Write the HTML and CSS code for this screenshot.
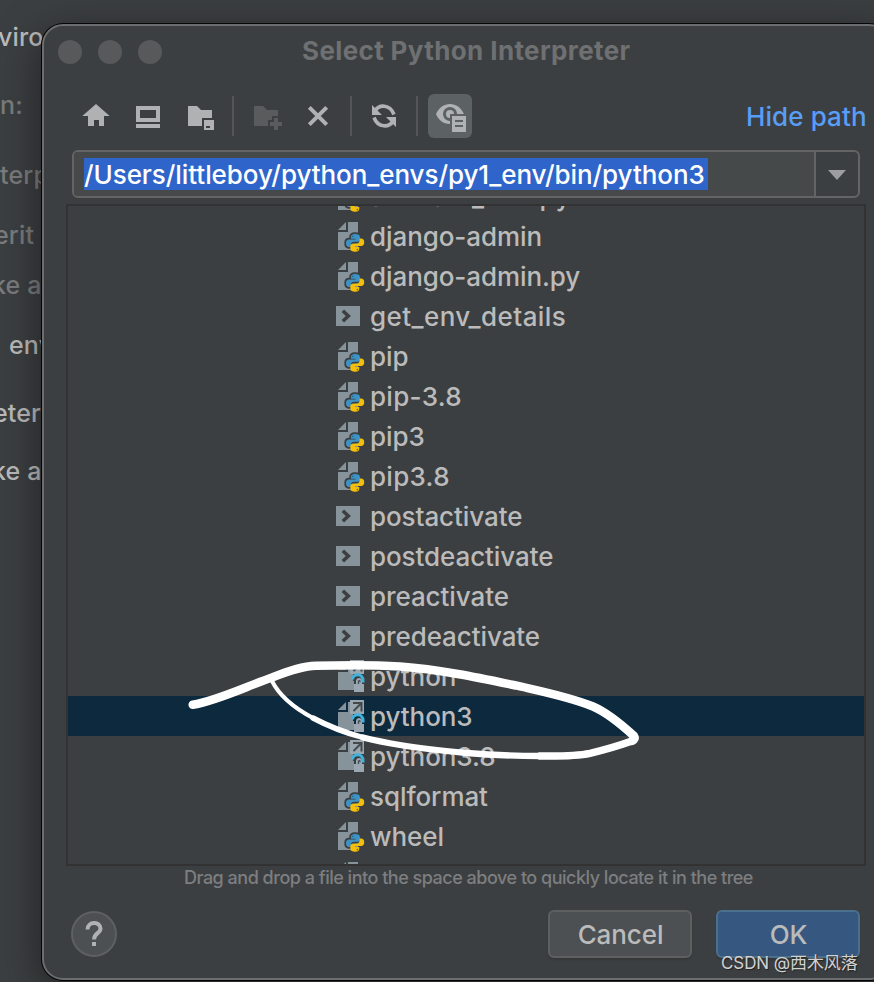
FILE: index.html
```html
<!DOCTYPE html>
<html lang="en">
<head>
<meta charset="utf-8">
<title>Select Python Interpreter</title>
<link rel="stylesheet" href="styles.css">
</head>
<body>
<svg class="defs" width="0" height="0" aria-hidden="true">
  <symbol id="py" viewBox="0 0 32 40">
    <path fill="#87939a" d="M2 14L10 6v8zM12 6h10v28H2V16h10z"/>
    <g transform="translate(9.600 17.300)">
      <path fill="#3c3f41" stroke="#3c3f41" stroke-width="2.800" transform="scale(1.19)" d="M8 .5C5.500.5 4.500 1.500 4.500 3v1.500h3.700v.7H3C1.300 5.200.3 6.500.3 8.400c0 2 1.100 3.100 2.500 3.100h1.500V9.800c0-1.500 1.200-2.600 2.700-2.600h3c1.200 0 2-.9 2-2V3C12 1.400 10.400.5 8 .5z"/>
      <path fill="#3d94c4" transform="scale(1.19)" d="M8 .5C5.500.5 4.500 1.500 4.500 3v1.500h3.700v.7H3C1.300 5.200.3 6.500.3 8.400c0 2 1.100 3.100 2.500 3.100h1.500V9.800c0-1.500 1.200-2.600 2.700-2.600h3c1.200 0 2-.9 2-2V3C12 1.400 10.400.5 8 .5z"/>
      <path fill="#f2bf0c" transform="translate(19 19) scale(-1.190)" d="M8 .5C5.500.5 4.500 1.500 4.500 3v1.500h3.700v.7H3C1.300 5.200.3 6.500.3 8.400c0 2 1.100 3.100 2.500 3.100h1.500V9.800c0-1.500 1.200-2.600 2.700-2.600h3c1.200 0 2-.9 2-2V3C12 1.400 10.400.5 8 .5z"/>
      <circle cx="7.200" cy="2.900" r=".8" fill="#2c6387"/><circle cx="11.800" cy="16.300" r=".8" fill="#6b5a1c"/>
    </g>
  </symbol>
  <symbol id="sh" viewBox="0 0 32 40">
    <path fill="#87939a" d="M0 10h24v20H0z"/>
    <path fill="none" stroke="#3c3f41" stroke-width="3.600" d="M6.800 14.800L12.300 20l-5.500 5.200"/>
  </symbol>
  <symbol id="ln" viewBox="0 0 32 40">
    <path fill="#87939a" d="M2 14L10 6v8zM12 6h2v12h3v7h1v9H2V16h10z"/>
    <path fill="#9aa7b0" d="M14 4h14v14H14z"/>
    <path fill="none" stroke="#45494c" stroke-width="2" d="M17 7h8.500v8.500M25 7.500l-7.500 7.500"/>
    <path fill="none" stroke="#3fb3dc" stroke-width="3" d="M16.500 23.500c.5-6.500 10.500-6.500 10.500 1v2"/>
    <path fill="#9aa7b0" d="M18 28h2v-3c0-4 6-4 6 0v3h2v8H18z"/>
    <path fill="none" stroke="#44525c" stroke-width="1.400" d="M22.500 28v-2.500c.2-1.500 1.800-1 1.500.5"/>
  </symbol>
</svg>
<main class="screen">
  <div class="behind">
    <div class="line l1">viro</div>
    <div class="line l2 dim">n:</div>
    <div class="line l3 dim">terp</div>
    <div class="line l4 dim">erit</div>
    <div class="line l5 dim">ke a</div>
    <div class="line l6">env</div>
    <div class="line l7">eter</div>
    <div class="line l8">ke a</div>
  </div>

  <section class="dialog">
    <header class="titlebar">
      <div class="lights"><i></i><i></i><i></i></div>
      <h1><span>Select Python Interpreter</span></h1>
    </header>

    <div class="toolbar">
      <svg width="32" height="32"><path fill="#afb1b3" d="M16 4L29.700 16H24v10h-5v-6h-5v6H8V16H2.300z"/></svg>
      <svg class="g20" width="32" height="32"><path fill="#afb1b3" fill-rule="evenodd" d="M4 6h24v16H4zM8 10v8h16v-8zM4 24h24v4H4z"/></svg>
      <svg class="g20" width="32" height="32"><path fill="#afb1b3" fill-rule="evenodd" d="M4 6h9l4 4h11v8H18v8H4zM20 20h10v10H20zM22 26v2h4v-2z"/></svg>
      <i class="sep g16"></i>
      <svg class="g16" width="32" height="32"><path fill="#5a5b5c" d="M4 6h9l4 4h11v6h-6v4h-4v6H4zM24 18h4v4h4v4h-4v4h-4v-4h-4v-4h4z"/></svg>
      <svg class="g20" width="32" height="32"><path stroke="#afb1b3" stroke-width="4" d="M7.300 7.300l17.400 17.400M24.700 7.300L7.300 24.700"/></svg>
      <i class="sep g16"></i>
      <svg class="g16" width="32" height="32"><path fill="none" stroke="#afb1b3" stroke-width="3.600" d="M7 11c4-7 15-7 19 3.500M25 21c-4 7-15 7-19-3.500"/><path fill="#afb1b3" d="M4 5v10h10zM28 27V17H18z"/></svg>
      <i class="sep g16"></i>
      <span class="toggle">
        <svg width="44" height="44"><path fill="#afb1b3" fill-rule="evenodd" d="M8 20c3-6.500 8-10 14-10s11 3.500 14 10H22v10C15 30 10.500 26 8 20zM22 13a7 7 0 1 0 .01 0z"/><circle cx="22" cy="20" r="4" fill="#afb1b3"/><path fill="#5c6164" d="M22 20h18v20H22z"/><path fill="#afb1b3" fill-rule="evenodd" d="M24 22h14v16H24zM27 26v2h8v-2zM27 31v2h8v-2z"/></svg>
      </span>
      <a class="hide"><span>Hide path</span></a>
    </div>

    <div class="combo">
      <div class="field"><span class="sel"><span>/Users/littleboy/python_envs/py1_env/bin/python3</span></span></div>
      <div class="drop"><svg width="18" height="10"><path fill="#9c9ea0" d="M0 0h18L9 10z"/></svg></div>
    </div>

    <div class="tree">
      <div class="row first"><svg><use href="#py"/></svg><span class="wide">activate_this.py</span></div>
      <div class="row"><svg><use href="#py"/></svg><span>django-admin</span></div>
      <div class="row"><svg><use href="#py"/></svg><span>django-admin.py</span></div>
      <div class="row"><svg><use href="#sh"/></svg><span class="wide">get_env_details</span></div>
      <div class="row"><svg><use href="#py"/></svg><span>pip</span></div>
      <div class="row"><svg><use href="#py"/></svg><span class="num">pip-3.8</span></div>
      <div class="row"><svg><use href="#py"/></svg><span>pip3</span></div>
      <div class="row"><svg><use href="#py"/></svg><span class="num">pip3.8</span></div>
      <div class="row"><svg><use href="#sh"/></svg><span>postactivate</span></div>
      <div class="row"><svg><use href="#sh"/></svg><span>postdeactivate</span></div>
      <div class="row"><svg><use href="#sh"/></svg><span>preactivate</span></div>
      <div class="row"><svg><use href="#sh"/></svg><span>predeactivate</span></div>
      <div class="row"><svg><use href="#ln"/></svg><span>python</span></div>
      <div class="row selected"><svg><use href="#ln"/></svg><span>python3</span></div>
      <div class="row"><svg><use href="#ln"/></svg><span>python3.8</span></div>
      <div class="row"><svg><use href="#py"/></svg><span>sqlformat</span></div>
      <div class="row"><svg><use href="#py"/></svg><span>wheel</span></div>
      <div class="row"><svg><use href="#py"/></svg></div>
    </div>

    <p class="hint"><span>Drag and drop a file into the space above to quickly locate it in the tree</span></p>

    <footer class="actions">
      <span class="help"><svg width="18" height="26"><path fill="none" stroke="#afb1b3" stroke-width="4" d="M2.500 8.500C2.500 0 15.500 0 15.500 7.500c0 5-6.500 4.500-6.500 11"/><path fill="#afb1b3" d="M7 21h4v4H7z"/></svg></span>
      <span class="btn cancel">Cancel</span>
      <span class="btn ok">OK</span>
    </footer>
  </section>

  <svg class="ink" width="874" height="982" viewBox="0 0 874 982">
    <g fill="none" stroke="#fff" stroke-linecap="round" stroke-linejoin="round">
      <path stroke-width="8.500" d="M192.700 704.800C216 701 245 687 272 677.500C290 670.500 303 666 316 665.800C345 665 375 665 400 666.500C440 669.500 480 678 517 685.700C540 691 570 697 593 706.500C608 713 622 725 634 736Q636 739 632 741"/>
      <path stroke-width="7.400" d="M632 741C618 746 606 749.500 590 753.300C575 756.500 560 756 540 756"/>
      <path stroke-width="6.300" d="M540 756C515 756 490 755 466.700 753C450 751.500 420 748.500 400 745C388 743 375 740.500 363 737.500"/>
      <path stroke-width="5.400" d="M363 737.500C346 733 328 726 313 718"/>
      <path stroke-width="4" d="M313 718C298 710 280 697 272 681"/>
    </g>
  </svg>
  <div class="watermark"><span>CSDN @西木风落</span></div>
</main>
</body>
</html>
```
FILE: styles.css
```css
* { box-sizing: border-box; }
body {
  margin: 0;
  width: 874px;
  height: 982px;
  overflow: hidden;
  background: #3c3f41;
  font-family: Inter, "Noto Sans CJK SC", sans-serif;
  font-size: 26px;
  font-weight: 450;
  color: #bbbbbb;
}
svg { display: block; flex: none; }
.defs { position: absolute; }
.screen { position: relative; width: 874px; height: 982px; overflow: hidden; }

.behind { display: flex; flex-direction: column; width: 60px; }
.line { height: 30px; line-height: 30px; font-size: 25px; letter-spacing: .15px; white-space: pre; }
.dim { color: #7b7c7d; }
.l1 { margin: 22px 0 0 -2px; }
.l2 { margin-top: 38px; }
.l3 { margin-top: 40px; }
.l4 { margin: 30px 0 0 -6px; }
.l5 { margin: 20px 0 0 -8px; }
.l6 { margin: 30px 0 0 9px; }
.l7 { margin: 38px 0 0 -7px; }
.l8 { margin: 28px 0 0 -8px; }

.dialog {
  position: absolute;
  left: 42px;
  top: 24px;
  width: 848px;
  height: 956px;
  border: 2px solid #6b6d6e;
  border-radius: 21px;
  background: #3c3f41;
  box-shadow: 0 0 0 1px #050505, 0 12px 44px rgba(0, 0, 0, .5);
}

.titlebar { display: flex; align-items: center; height: 52px; padding-left: 14px; }
.lights { display: flex; gap: 16px; width: 244px; }
.lights i { width: 24px; height: 24px; border-radius: 50%; background: #58595b; }
h1 { margin: 0; font-size: 26px; line-height: 30px; font-weight: 700; color: #6e7072; letter-spacing: .37px; white-space: nowrap; padding-bottom: 2px; }

.toolbar { display: flex; align-items: center; height: 44px; margin-top: 16px; padding-left: 36px; }
.g20 { margin-left: 20px; }
.g16 { margin-left: 16px; }
.sep { width: 2px; height: 40px; background: #555555; }
.toggle { width: 44px; height: 44px; margin-left: 10px; border-radius: 6px; background: #5c6164; }
.hide { margin-left: 274px; padding-top: 2px; color: #589df6; letter-spacing: .1px; white-space: nowrap; line-height: 32px; }

.combo {
  display: flex;
  width: 788px;
  height: 48px;
  margin: 12px 0 0 28px;
  border: 2px solid #646464;
  border-radius: 6px;
}
.field { display: flex; align-items: center; width: 740px; padding-left: 10px; background: #45494a; border-radius: 4px 0 0 4px; }
.sel { width: 624px; height: 32px; line-height: 34px; background: #2f65ca; color: #fff; letter-spacing: -.07px; white-space: nowrap; }
.drop { display: flex; flex: 1; align-items: center; justify-content: center; padding-top: 2px; border-left: 2px solid #646464; }

.tree { width: 800px; height: 662px; margin: 6px 0 0 22px; border: 2px solid #323232; overflow: hidden; }
.row { display: flex; align-items: center; height: 40px; padding-left: 268px; line-height: 40px; letter-spacing: -.08px; white-space: nowrap; }
.row svg { width: 32px; height: 40px; margin-right: 2px; }
.row span { padding-top: 2px; }
.first { margin-top: -30px; }
.row .wide { letter-spacing: .42px; }
.row .num { letter-spacing: .3px; }
.selected { background: #0d293e; }

.hint { margin: 0; padding-left: 140px; height: 24px; line-height: 24px; font-size: 18px; letter-spacing: -.49px; color: #7c7e80; white-space: nowrap; }

.actions { display: flex; align-items: center; margin-top: 20px; height: 48px; padding-left: 27px; }
.help { display: flex; align-items: center; justify-content: center; width: 46px; height: 46px; border: 2px solid #5e6060; border-radius: 50%; background: #4c5052; }
.btn { width: 144px; height: 48px; border: 2px solid #5e6060; border-radius: 6px; background: #4c5052; line-height: 46px; text-align: center; letter-spacing: -.1px; padding-left: 1px; box-shadow: 0 2px 2px rgba(0, 0, 0, .12); }
.cancel { margin-left: 431px; }
.ok { margin-left: 24px; background: #365880; border-color: #4c708c; }

.ink { position: absolute; left: 0; top: 0; }
.watermark { position: absolute; left: 721px; top: 950px; font-size: 17px; font-weight: 400; line-height: 26px; letter-spacing: -.1px; color: #d2d2d2; white-space: nowrap; text-shadow: 1px 1px 1px #222; }
```
